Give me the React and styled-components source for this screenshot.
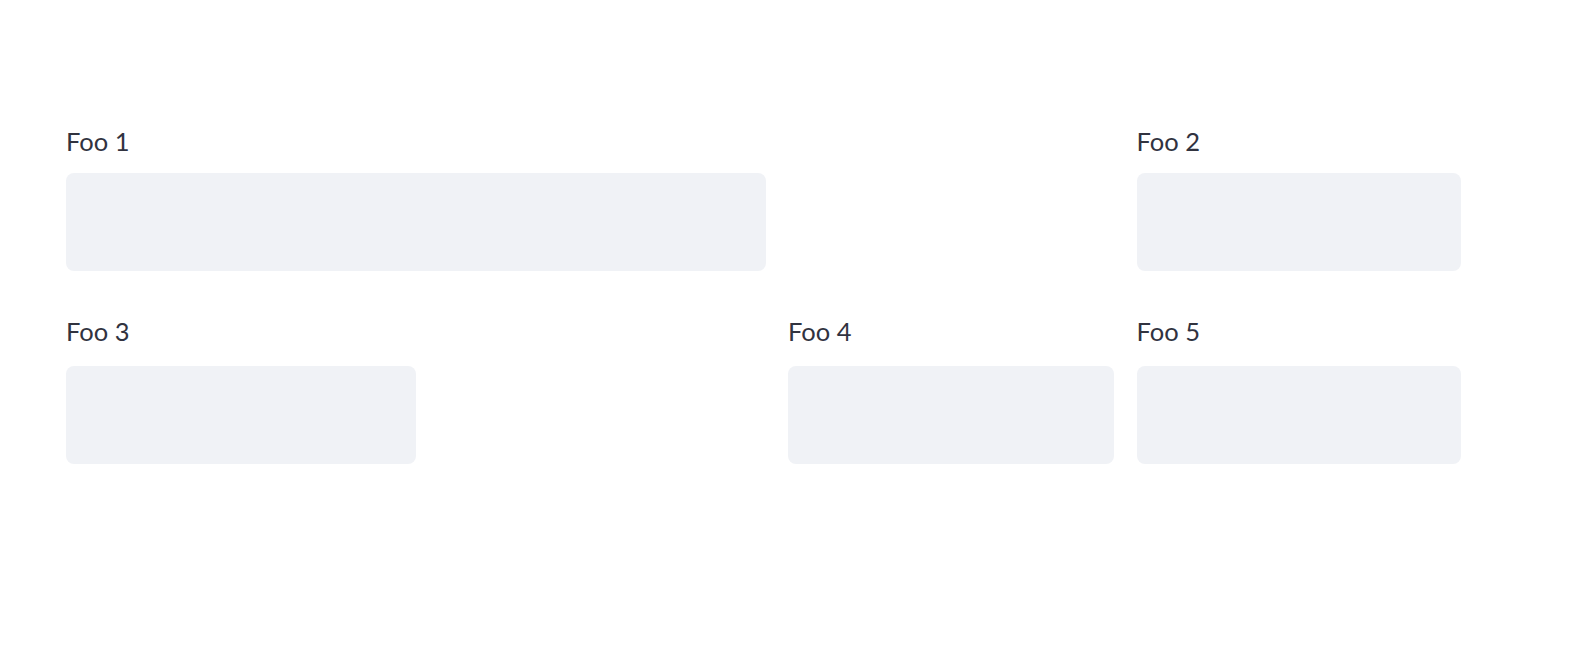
import styled, { createGlobalStyle } from 'styled-components';

const GlobalStyle = createGlobalStyle`
  html, body {
    margin: 0;
    padding: 0;
    background: #ffffff;
  }
  body {
    font-family: Lato, "Noto Sans", sans-serif;
    color: #31333f;
  }
`;

const Page = styled.main`
  padding: 124.8px 0 0 66px;
`;

const Grid = styled.div`
  display: grid;
  grid-template-columns: 350px 327px 326px 324px;
  column-gap: 22.5px;
  row-gap: 43.5px;
  width: 1394px;
`;

const Field = styled.div`
  display: flex;
  flex-direction: column;
  grid-column: ${(p) => p.$col};
  grid-row: ${(p) => p.$row};
`;

const Label = styled.label`
  font-size: 25.5px;
  line-height: 32px;
  margin-bottom: ${(p) => p.$space}px;
  white-space: nowrap;
`;

const Area = styled.div`
  height: 98px;
  border-radius: 8px;
  background: #f0f2f6;
`;

const fields = [
  { label: 'Foo 1', col: '1 / 3', row: 1 },
  { label: 'Foo 2', col: '4', row: 1 },
  { label: 'Foo 3', col: '1', row: 2 },
  { label: 'Foo 4', col: '3', row: 2 },
  { label: 'Foo 5', col: '4', row: 2 },
];

function App() {
  return (
    <Page>
      <GlobalStyle />
      <Grid>
        {fields.map((f) => (
          <Field key={f.label} $col={f.col} $row={f.row}>
            <Label $space={f.row === 1 ? 16.5 : 19.2}>{f.label}</Label>
            <Area />
          </Field>
        ))}
      </Grid>
    </Page>
  );
}

export default App;
